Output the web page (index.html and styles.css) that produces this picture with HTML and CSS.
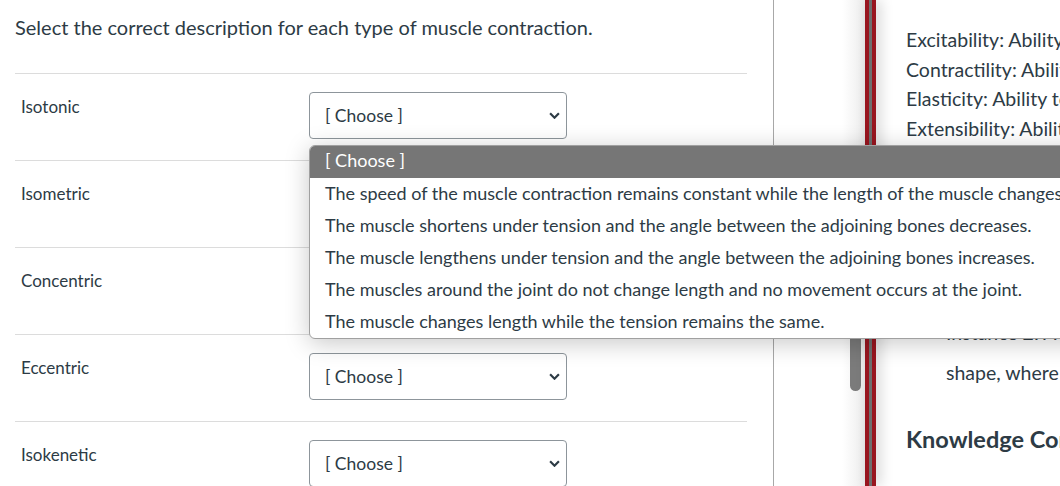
FILE: index.html
```html
<!DOCTYPE html>
<html>
<head>
<meta charset="utf-8">
<link rel="stylesheet" href="styles.css">
</head>
<body>
<div class="page">
  <main class="main">
    <p class="title">Select the correct description for each type of muscle contraction.</p>
    <div class="rows">
      <div class="row">
        <div class="label">Isotonic</div>
        <div class="select"><span>[ Choose ]</span><svg class="chev" viewBox="0 0 10 6" width="11" height="7"><path d="M1 1 L5 5 L9 1" fill="none" stroke="#2d3b45" stroke-width="2"/></svg></div>
      </div>
      <div class="row">
        <div class="label">Isometric</div>
        <div class="select"><span>[ Choose ]</span><svg class="chev" viewBox="0 0 10 6" width="11" height="7"><path d="M1 1 L5 5 L9 1" fill="none" stroke="#2d3b45" stroke-width="2"/></svg></div>
      </div>
      <div class="row">
        <div class="label">Concentric</div>
        <div class="select"><span>[ Choose ]</span><svg class="chev" viewBox="0 0 10 6" width="11" height="7"><path d="M1 1 L5 5 L9 1" fill="none" stroke="#2d3b45" stroke-width="2"/></svg></div>
      </div>
      <div class="row">
        <div class="label">Eccentric</div>
        <div class="select"><span>[ Choose ]</span><svg class="chev" viewBox="0 0 10 6" width="11" height="7"><path d="M1 1 L5 5 L9 1" fill="none" stroke="#2d3b45" stroke-width="2"/></svg></div>
      </div>
      <div class="row">
        <div class="label">Isokenetic</div>
        <div class="select"><span>[ Choose ]</span><svg class="chev" viewBox="0 0 10 6" width="11" height="7"><path d="M1 1 L5 5 L9 1" fill="none" stroke="#2d3b45" stroke-width="2"/></svg></div>
      </div>
    </div>
  </main>
  <div class="gutter">
    <div class="thumb"></div>
  </div>
  <div class="divider"><span class="stripe"></span><span class="mid"></span><span class="stripe"></span></div>
  <aside class="side">
    <p class="side-line">Excitability: Ability to respond to a stimulus.</p>
    <p class="side-line">Contractility: Ability to shorten forcibly.</p>
    <p class="side-line">Elasticity: Ability to recoil to resting length.</p>
    <p class="side-line">Extensibility: Ability to be stretched.</p>
    <p class="side-line hidden-line">Instance 2: A muscle returns to its</p>
    <p class="side-line indent">shape, where it was before stretching.</p>
    <h3 class="side-head">Knowledge Connections</h3>
  </aside>
  <ul class="dropdown">
    <li class="opt active">[ Choose ]</li>
    <li class="opt">The speed of the muscle contraction remains constant while the length of the muscle changes.</li>
    <li class="opt">The muscle shortens under tension and the angle between the adjoining bones decreases.</li>
    <li class="opt">The muscle lengthens under tension and the angle between the adjoining bones increases.</li>
    <li class="opt">The muscles around the joint do not change length and no movement occurs at the joint.</li>
    <li class="opt">The muscle changes length while the tension remains the same.</li>
  </ul>
</div>
</body>
</html>
```
FILE: styles.css
```css
* { box-sizing: border-box; }
html, body { margin: 0; padding: 0; }
body {
  font-family: Lato, "Open Sans", sans-serif;
  color: #2d3b45;
  background: #fff;
  width: 1060px;
  height: 486px;
  overflow: hidden;
}
.page {
  position: relative;
  display: flex;
  width: 1060px;
  height: 486px;
  overflow: hidden;
}
.main {
  width: 774px;
  flex: none;
  border-right: 1px solid #a8a8a8;
  padding: 14px 26px 0 15px;
}
.title {
  margin: 0;
  font-size: 20px;
  line-height: 26px;
  height: 59px;
}
.rows { display: flex; flex-direction: column; }
.row {
  display: flex;
  border-top: 1px solid #dcdcdc;
  height: 87px;
  padding: 18px 0 0 6px;
}
.label {
  width: 288px;
  font-size: 17px;
  line-height: 24px;
  padding-top: 3px;
}
.select {
  width: 258px;
  height: 47px;
  border: 1px solid #8d959b;
  border-radius: 4px;
  display: flex;
  align-items: center;
  justify-content: space-between;
  padding: 0 6px 0 15px;
  font-size: 17.5px;
  background: #fff;
}
.chev { display: block; }
.gutter {
  width: 91px;
  flex: none;
  display: flex;
  justify-content: flex-end;
  padding-right: 4px;
  background: linear-gradient(to right, #fff 0%, #fff 75%, #ececec 100%);
}
.thumb {
  width: 11px;
  height: 100px;
  margin-top: 291px;
  background: #7b7b7b;
  border-radius: 0 0 6px 6px;
}
.divider {
  width: 11px;
  flex: none;
  display: flex;
  position: relative;
  z-index: 1;
  box-shadow: 4px 0 14px rgba(0,0,0,0.18);
}
.stripe { width: 4px; background: #98151f; }
.mid { width: 3px; background: #6e6e6e; }
.side {
  flex: 1;
  padding: 25px 0 0 30px;
  white-space: nowrap;
  overflow: hidden;
  background: #fff;
}
.side-line {
  margin: 0;
  font-size: 19.5px;
  line-height: 29.67px;
}
.hidden-line { margin-top: 174px; padding-left: 40px; line-height: 30px; }
.indent { padding-left: 40px; margin-top: 10px; line-height: 30px; }
.side-head {
  margin: 37px 0 0;
  font-size: 23.5px;
  line-height: 28px;
  font-weight: 700;
}
.dropdown {
  position: absolute;
  left: 309px;
  top: 145px;
  width: 800px;
  margin: 0;
  padding: 0;
  list-style: none;
  background: #fff;
  border: 1px solid #a0a0a0;
  border-radius: 6px;
  overflow: hidden;
  box-shadow: 0 4px 24px rgba(0,0,0,0.22);
  z-index: 5;
}
.opt {
  height: 32px;
  line-height: 30px;
  padding-left: 15px;
  font-size: 18px;
  white-space: nowrap;
}
.opt.active {
  background: #767676;
  color: #fff;
  line-height: 29px;
}
```
